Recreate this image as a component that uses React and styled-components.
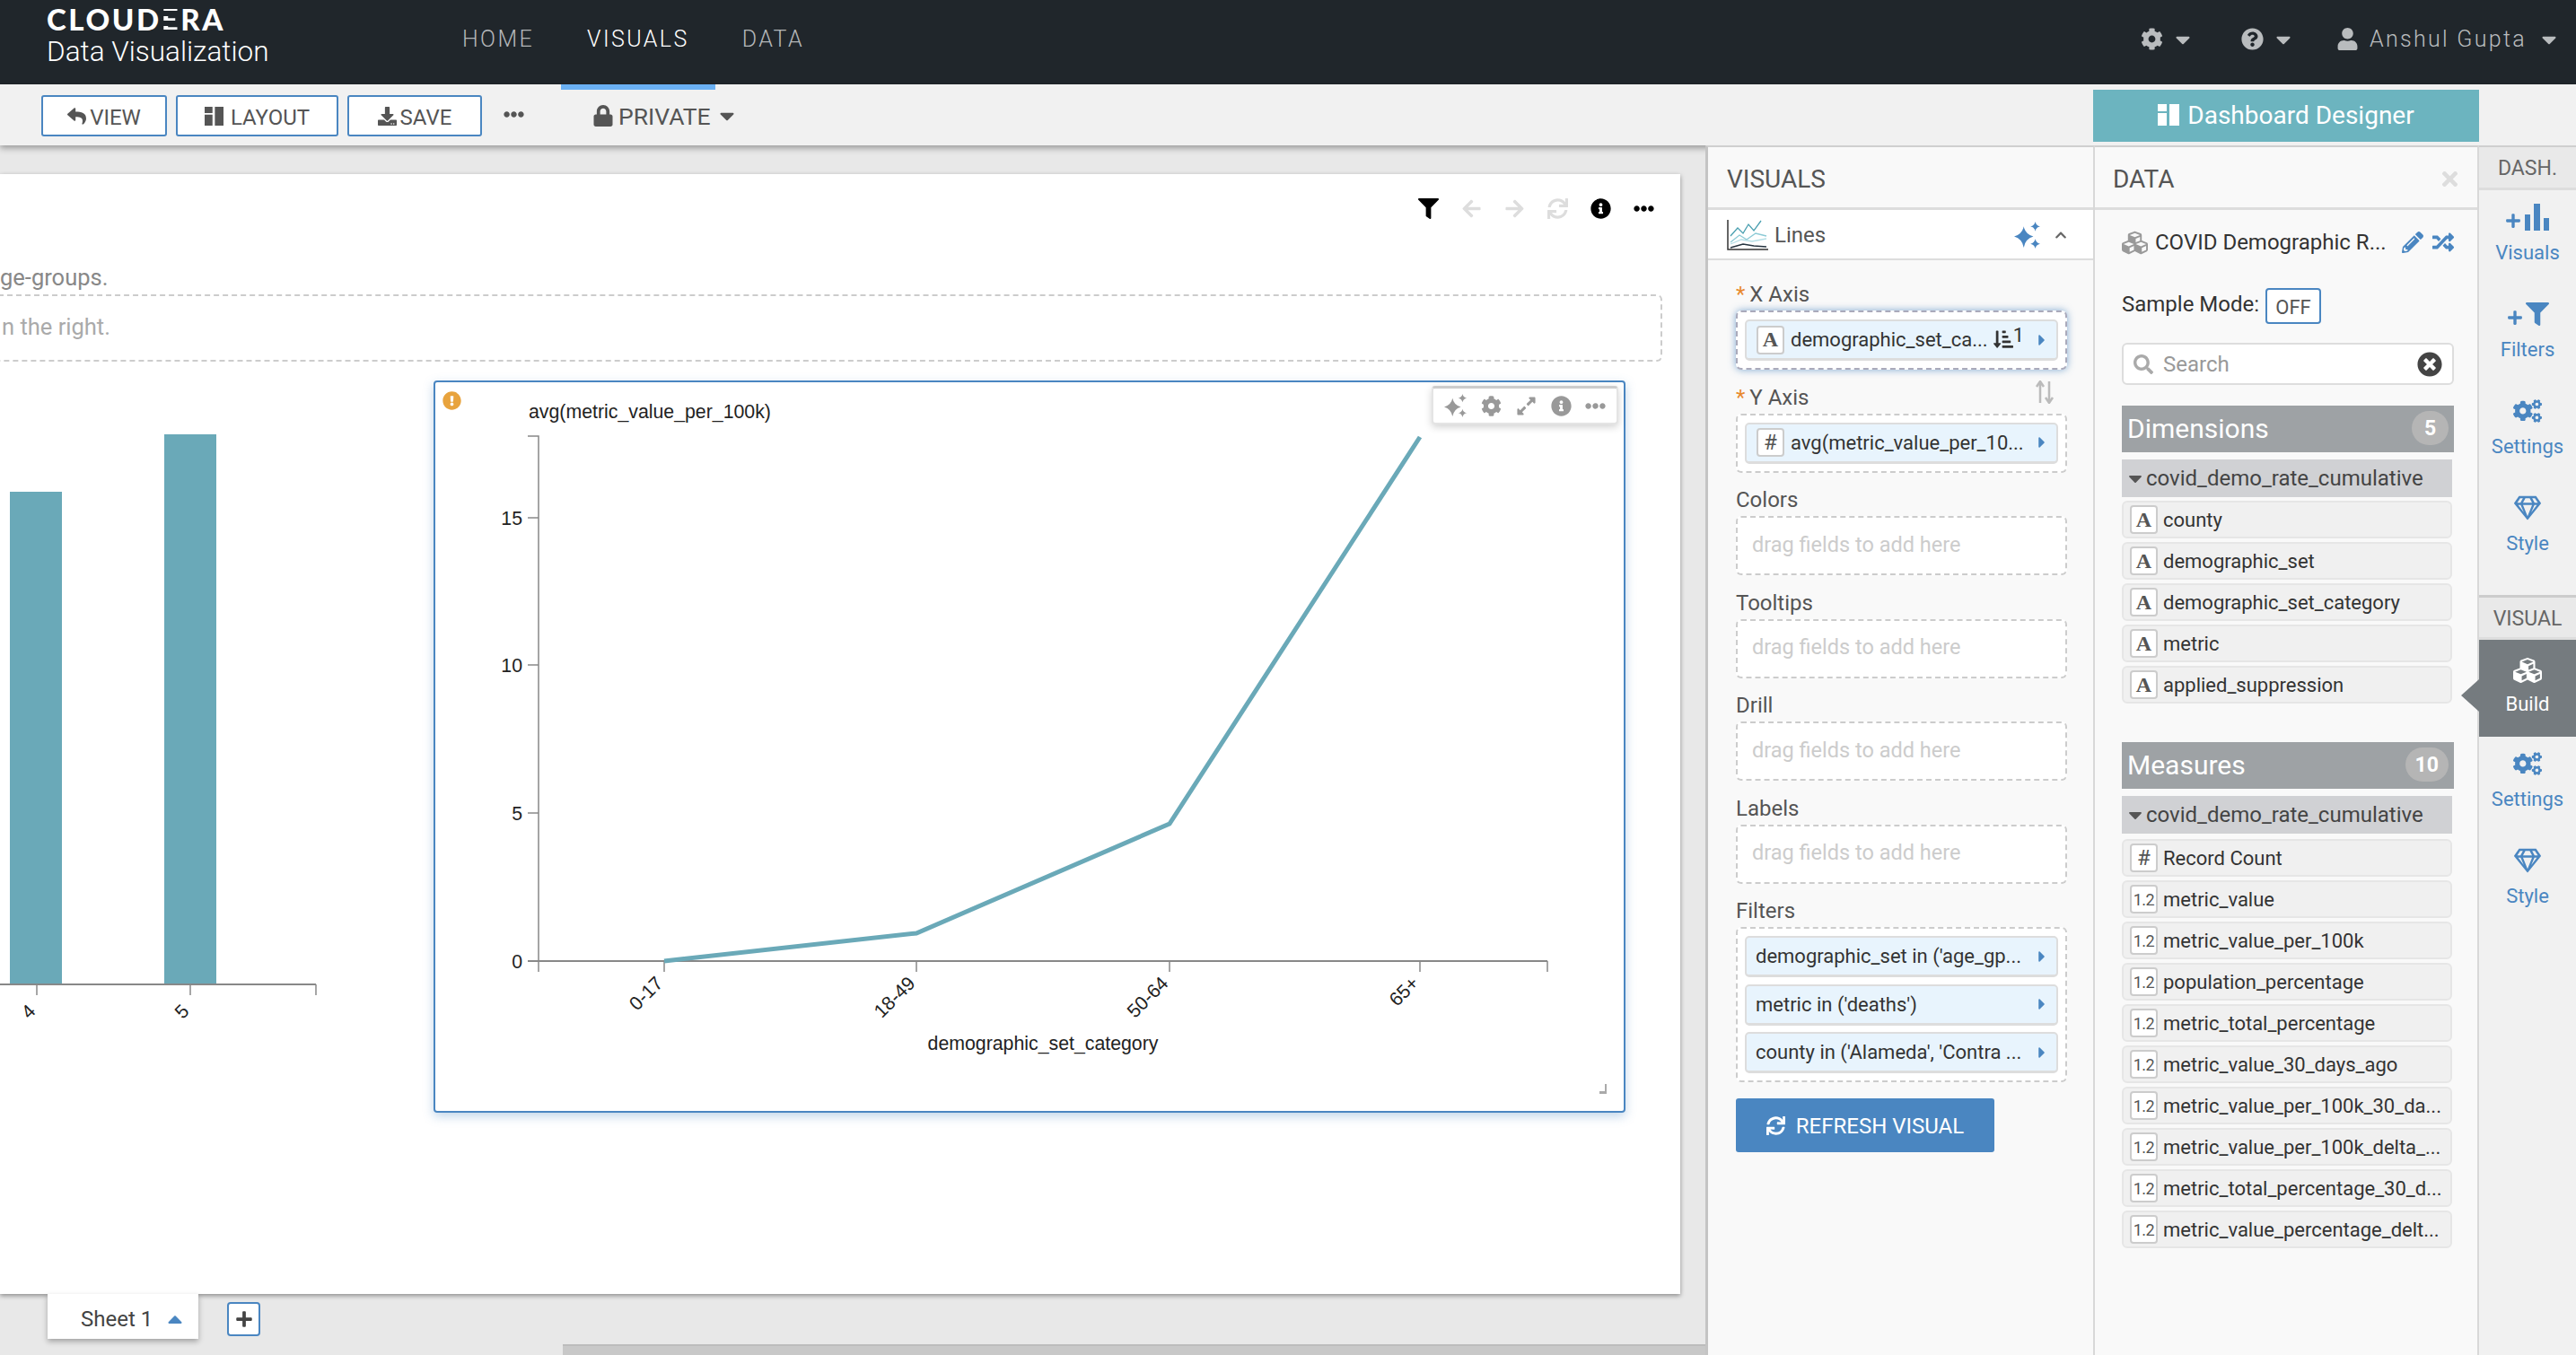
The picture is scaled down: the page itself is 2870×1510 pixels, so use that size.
import React from "react";
import styled, { createGlobalStyle } from "styled-components";
import {
  FaCog, FaQuestionCircle, FaUser, FaLock, FaReply, FaDownload, FaEllipsisH, FaFilter,
  FaArrowLeft, FaArrowRight, FaSync, FaInfoCircle, FaExpandAlt, FaPencilAlt, FaRandom,
  FaSearch, FaTimesCircle, FaTimes, FaCubes, FaCogs, FaRegGem, FaPlus, FaCaretRight,
  FaCaretDown, FaCaretUp, FaExclamationCircle, FaSortAmountDownAlt, FaChevronUp,
} from "react-icons/fa";

const BLUE = "#4a86c1";
const TEAL = "#6aa9b8";

const Global = createGlobalStyle`
  html, body { margin: 0; padding: 0; background: #e8e8e8; }
  body { font-family: Roboto, "Liberation Sans", sans-serif; color: #333; }
  * { box-sizing: border-box; }
`;

const Page = styled.div`
  width: 2870px;
  height: 1510px;
  overflow: hidden;
  display: flex;
  flex-direction: column;
`;

/* top navigation */
const TopBar = styled.header`
  height: 94px;
  background: #20262b;
  display: flex;
  align-items: center;
  padding: 0 17px 7px 52px;
  flex: none;
`;
const Brand = styled.div`
  width: 463px;
  color: #fff;
  margin-top: -8px;
`;
const BrandTop = styled.div`
  font-family: Lato, Roboto, sans-serif;
  font-size: 33px;
  font-weight: 900;
  letter-spacing: 2.6px;
  line-height: 36px;
`;
const StripedE = styled.span`
  color: transparent;
  background: linear-gradient(to bottom, transparent 16%, #fff 16%, #fff 28%, transparent 28%, transparent 43%, #fff 43%, #fff 54%, transparent 54%, transparent 69%, #fff 69%, #fff 81%, transparent 81%);
  -webkit-background-clip: text;
  background-clip: text;
`;
const BrandSub = styled.div`
  font-size: 31.5px;
  font-weight: 300;
  line-height: 37px;
`;
const NavLink = styled.a`
  font-size: 25px;
  font-weight: 300;
  letter-spacing: 2.4px;
  color: ${(p) => (p.$active ? "#fff" : "#b4b7b9")};
  margin-right: ${(p) => p.$gap}px;
`;
const TopRight = styled.div`
  margin-left: auto;
  display: flex;
  align-items: center;
  color: #b9bcbe;
  font-size: 25px;
  font-weight: 300;
  letter-spacing: 2.3px;
`;
const TopItem = styled.div`
  display: flex;
  align-items: center;
  gap: ${(p) => p.$gap}px;
  margin-left: ${(p) => p.$left}px;
  svg { font-size: 25px; flex: none; }
`;
const SmallCaret = styled(FaCaretDown)`
  font-size: 26px !important;
`;

/* toolbar */
const Toolbar = styled.div`
  height: 68px;
  flex: none;
  background: #f1f1f1;
  display: flex;
  padding-left: 46px;
  position: relative;
  z-index: 1;
  box-shadow: 0 3px 7px rgba(0, 0, 0, 0.35);
`;
const ActiveMark = styled.div`
  position: absolute;
  left: 625px;
  top: 0;
  width: 172px;
  height: 6px;
  background: #6ab0f3;
`;
const ToolButton = styled.button`
  height: 46px;
  margin-top: 12px;
  margin-right: 10px;
  width: ${(p) => p.$w}px;
  border: 2px solid ${BLUE};
  border-radius: 3px;
  background: #fff;
  color: #555;
  font: 400 24px Roboto, sans-serif;
  display: flex;
  align-items: center;
  justify-content: center;
  gap: ${(p) => p.$gap || 4}px;
  padding: 3px 0 0;
  svg { font-size: 21px; flex: none; margin-top: -3px; }
`;
const Dots = styled.div`
  margin: 15px 0 0 14px;
  height: 36px;
  display: flex;
  align-items: center;
  color: #555;
  font-size: 23px;
`;
const PrivateMenu = styled.div`
  margin-left: 76px;
  margin-top: 15px;
  height: 40px;
  display: flex;
  align-items: center;
  gap: 5px;
  color: #555;
  font-size: 26.5px;
  svg { font-size: 24px; }
`;
const DesignerTab = styled.div`
  position: absolute;
  left: 2332px;
  top: 6px;
  width: 430px;
  height: 58px;
  background: #6cb4bf;
  color: #fff;
  font-size: 28px;
  display: flex;
  align-items: center;
  justify-content: center;
  gap: 9px;
  padding-bottom: 2px;
`;

/* main area */
const Body = styled.div`
  flex: 1;
  display: flex;
  min-height: 0;
`;
const Canvas = styled.main`
  width: 1900px;
  flex: none;
  padding-top: 32px;
  position: relative;
  background: #e8e8e8;
`;
const Sheet = styled.section`
  width: 1872px;
  height: 1248px;
  background: #fff;
  overflow: hidden;
  box-shadow: 0 2px 5px rgba(0, 0, 0, 0.4);
`;
const SheetTools = styled.div`
  height: 36px;
  margin-top: 20px;
  padding-right: 29px;
  display: flex;
  justify-content: flex-end;
  align-items: center;
  gap: 25px;
`;
const SheetTool = styled.span`
  display: flex;
  color: ${(p) => (p.$off ? "#ddd" : "#000")};
  font-size: 23px;
`;
const SheetDesc = styled.div`
  margin-top: 45px;
  height: 28px;
  line-height: 28px;
  font-size: 25.5px;
  color: #888;
`;
const DescBox = styled.div`
  margin: 5px 20px 0 -8px;
  height: 75px;
  padding: 0 0 3px 8px;
  border: 2px dashed #ccc;
  border-radius: 6px;
  display: flex;
  align-items: center;
  font-size: 25.5px;
  color: #aaa;
`;
const Charts = styled.div`
  margin-top: 21px;
  display: flex;
  align-items: flex-start;
`;
const LeftChart = styled.svg`
  width: 483px;
  height: 816px;
  flex: none;
  display: block;
`;
const Card = styled.div`
  position: relative;
  width: 1328px;
  height: 816px;
  border: 2px solid ${BLUE};
  border-radius: 4px;
  box-shadow: 0 4px 12px rgba(74, 134, 193, 0.35);
  svg.plot { display: block; width: 1324px; height: 812px; }
`;
const WarnIcon = styled(FaExclamationCircle)`
  position: absolute;
  left: 8px;
  top: 10px;
  font-size: 21px;
  color: #e8a33d;
`;
const CardTools = styled.div`
  position: absolute;
  left: 1110px;
  top: 4px;
  width: 208px;
  height: 43px;
  background: #fff;
  border: 2px solid #e4e4e4;
  border-top: 3px solid #ccc;
  border-radius: 4px;
  box-shadow: 0 3px 8px rgba(0, 0, 0, 0.18);
  display: flex;
  align-items: center;
  justify-content: space-around;
  padding: 0 4px;
  color: #999;
  font-size: 23px;
  svg { flex: none; }
`;
const ResizeGrip = styled.div`
  position: absolute;
  right: 19px;
  bottom: 19px;
  width: 8px;
  height: 11px;
  border-right: 2px solid #aaa;
  border-bottom: 3px solid #aaa;
`;
const SheetTabs = styled.div`
  display: flex;
  align-items: flex-start;
  padding-left: 53px;
`;
const SheetTab = styled.div`
  width: 168px;
  height: 50px;
  background: #fff;
  box-shadow: 0 3px 6px rgba(0, 0, 0, 0.3);
  position: relative;
  display: flex;
  align-items: center;
  gap: 12px;
  padding: 5px 0 0 37px;
  font-size: 24px;
  color: #444;
  svg { color: ${BLUE}; font-size: 26px; }
`;
const AddSheet = styled.button`
  width: 37px;
  height: 38px;
  margin: 9px 0 0 32px;
  padding: 0;
  background: #fff;
  border: 2px solid ${BLUE};
  border-radius: 4px;
  display: flex;
  align-items: center;
  justify-content: center;
  color: #444;
  font-size: 20px;
`;
const Scrollbar = styled.div`
  position: absolute;
  left: 627px;
  bottom: 0;
  width: 1273px;
  height: 12px;
  background: #c8c8c8;
  border-top: 2px solid #bcbcbc;
`;

/* visuals / data columns */
const Panel = styled.aside`
  width: ${(p) => p.$w}px;
  flex: none;
  background: #f9f9f9;
  border-top: 2px solid #cfcfcf;
  border-left: ${(p) => (p.$edge ? "3px solid #c4c4c4" : "none")};
  border-right: 2px solid #d8d8d8;
  position: relative;
  z-index: 2;
`;
const PanelHead = styled.div`
  height: 70px;
  border-bottom: 3px solid #ddd;
  display: flex;
  align-items: center;
  justify-content: space-between;
  padding: 3px ${(p) => p.$pr || 0}px 0 ${(p) => p.$pl}px;
  font-size: 28px;
  color: #555;
  svg { color: #ddd; font-size: 25px; }
`;
const LinesRow = styled.div`
  height: 56px;
  background: #fff;
  border-bottom: 2px solid #ddd;
  display: flex;
  align-items: center;
  padding: 2px 29px 0 21px;
  font-size: 24px;
  color: #555;
  gap: 7px;
`;
const LinesEnd = styled.div`
  margin-left: auto;
  display: flex;
  align-items: center;
  gap: 15px;
  color: #666;
  svg.up { font-size: 14px; }
`;
const SparkleBox = styled.span`
  display: flex;
  color: ${BLUE};
`;
const Slots = styled.div`
  padding: 25px 29px 0 31px;
`;
const Slot = styled.div`
  margin-bottom: 17.5px;
`;
const SlotLabel = styled.div`
  height: 26px;
  line-height: 26px;
  margin-bottom: 5px;
  font-size: 24px;
  color: #555;
  display: flex;
  align-items: center;
  gap: 5px;
  b { color: #e8892f; font-weight: 400; }
`;
const SwapIcon = styled.svg`
  margin-left: auto;
  margin-right: 14px;
  margin-top: -12px;
  width: 22px;
  height: 26px;
`;
const Zone = styled.div`
  min-height: 66px;
  background: #fff;
  border: 2px dashed ${(p) => (p.$hot ? "#aab" : "#ccc")};
  border-radius: 6px;
  padding: 8px;
  display: flex;
  flex-direction: column;
  justify-content: center;
  gap: 7.5px;
  box-shadow: ${(p) => (p.$hot ? `0 0 8px rgba(74, 134, 193, 0.7)` : "none")};
`;
const Hint = styled.div`
  padding: 0 0 3px 8px;
  font-size: 23.5px;
  color: #ccc;
`;
const Pill = styled.div`
  height: 46px;
  background: #e8f4fd;
  border: 2px solid #ddd;
  border-bottom-width: 3px;
  border-radius: 5px;
  display: flex;
  align-items: center;
  padding: 0 6px 0 ${(p) => (p.$tag ? 11 : 10)}px;
  font-size: 22px;
  color: #333;
  gap: 7px;
  white-space: nowrap;
  svg.go { color: ${BLUE}; font-size: 20px; flex: none; }
`;
const PillText = styled.span`
  flex: 1;
  min-width: 0;
`;
const SortMark = styled.span`
  display: flex;
  align-items: flex-start;
  margin-right: 3px;
  line-height: 20px;
  margin-top: -4px;
  svg { font-size: 22px; margin-top: 3px; }
`;
const TypeTag = styled.span`
  width: 31px;
  height: 32px;
  flex: none;
  background: #fff;
  border: 2px solid #ccc;
  border-radius: 4px;
  display: flex;
  align-items: center;
  justify-content: center;
  color: #555;
  font-family: ${(p) => (p.$serif ? '"Liberation Serif", serif' : 'Roboto, sans-serif')};
  font-size: ${(p) => p.$size || 24}px;
  font-weight: ${(p) => (p.$serif ? 700 : 400)};
  letter-spacing: ${(p) => (p.$size ? "-0.5px" : 0)};
`;
const RefreshButton = styled.button`
  margin-top: 5px;
  width: 288px;
  height: 60px;
  background: ${BLUE};
  color: #fff;
  border: none;
  border-radius: 3px;
  font: 400 24px Roboto, sans-serif;
  display: flex;
  align-items: center;
  justify-content: center;
  gap: 12px;
  padding: 2px 0 0;
  svg { font-size: 21px; }
`;
const DataBody = styled.div`
  padding: 0 26px 0 30px;
`;
const DatasetRow = styled.div`
  height: 72px;
  display: flex;
  align-items: center;
  font-size: 24px;
  color: #333;
  gap: 8px;
  > svg:first-child { color: #999; font-size: 29px; }
`;
const DatasetIcons = styled.div`
  margin-left: auto;
  display: flex;
  gap: 10px;
  color: ${BLUE};
  font-size: 24px;
`;
const SampleRow = styled.div`
  margin-top: 15px;
  height: 40px;
  display: flex;
  align-items: center;
  gap: 7px;
  font-size: 24px;
  span { margin-top: -4px; }
`;
const OffButton = styled.button`
  width: 62px;
  height: 40px;
  padding: 3px 0 0;
  border: 2px solid ${BLUE};
  border-radius: 4px;
  background: #fff;
  color: #555;
  font: 400 22px Roboto, sans-serif;
`;
const SearchBox = styled.div`
  margin-top: 21px;
  height: 47px;
  background: #fff;
  border: 2px solid #ddd;
  border-radius: 6px;
  display: flex;
  align-items: center;
  padding: 0 11px;
  gap: 11px;
  font-size: 24px;
  color: #999;
  svg:first-child { font-size: 22px; color: #aaa; }
  svg:last-child { margin-left: auto; font-size: 28px; color: #444; }
`;
const SectionHead = styled.div`
  margin-top: ${(p) => p.$top}px;
  height: 52px;
  background: #9ea2a5;
  color: #fff;
  display: flex;
  align-items: center;
  justify-content: space-between;
  padding: 0 6px 2px;
  font-size: 30px;
`;
const Count = styled.span`
  min-width: 41px;
  height: 38px;
  padding: 0 11px;
  border-radius: 19px;
  background: #b5b5b5;
  font-size: 23px;
  font-weight: 700;
  display: flex;
  align-items: center;
  justify-content: center;
`;
const GroupRow = styled.div`
  margin-top: 8px;
  width: 368px;
  height: 42px;
  background: #d0d1d4;
  display: flex;
  align-items: center;
  padding-left: 3px;
  gap: 0;
  font-size: 24px;
  color: #444;
  svg { font-size: 24px; color: #555; }
`;
const FieldList = styled.div`
  margin-top: ${(p) => p.$top || 4}px;
  width: 368px;
  display: flex;
  flex-direction: column;
  gap: 4px;
`;
const Field = styled.div`
  height: 42px;
  background: #f0f0f0;
  border: 2px solid #e6e6e6;
  border-radius: 6px;
  display: flex;
  align-items: center;
  padding-left: 7px;
  gap: 6px;
  font-size: 22px;
  color: #333;
  white-space: nowrap;
  overflow: hidden;
`;

/* right rail */
const Rail = styled.nav`
  width: 108px;
  flex: none;
  background: #f1f1f1;
  border-top: 2px solid #cfcfcf;
  position: relative;
  z-index: 2;
`;
const RailHead = styled.div`
  height: ${(p) => p.$h}px;
  margin-top: ${(p) => p.$top || 0}px;
  background: #e9e9e9;
  border-top: ${(p) => (p.$line ? "3px solid #ccc" : "none")};
  border-bottom: 3px solid #ddd;
  display: flex;
  align-items: center;
  justify-content: center;
  padding-top: 2px;
  font-size: 23px;
  color: #666;
`;
const RailItem = styled.div`
  position: relative;
  height: 108px;
  display: flex;
  flex-direction: column;
  align-items: center;
  padding-top: ${(p) => (p.$active ? 17 : 13)}px;
  gap: ${(p) => (p.$active ? 6 : 8)}px;
  font-size: 22px;
  line-height: 30px;
  color: ${(p) => (p.$active ? "#fff" : BLUE)};
  background: ${(p) => (p.$active ? "#757b7f" : "transparent")};
  ${(p) => p.$active && `
    &::before {
      content: "";
      position: absolute;
      left: -20px;
      top: 44px;
      border-style: solid;
      border-width: 18px 20px 18px 0;
      border-color: transparent #757b7f transparent transparent;
    }
  `}
`;
const RailIcon = styled.div`
  height: 34px;
  display: flex;
  align-items: center;
  justify-content: center;
  gap: 3px;
  font-size: ${(p) => p.$size || 30}px;
`;
const PlusMark = styled(FaPlus)`
  font-size: 18px;
  margin-top: 8px;
`;

const LayoutGlyph = ({ size = 24 }) => (
  <svg width={size} height={size} viewBox="0 0 24 24" fill="currentColor">
    <rect x="0" y="0" width="10" height="8" />
    <rect x="0" y="10" width="10" height="14" />
    <rect x="13" y="0" width="11" height="24" />
  </svg>
);

const Sparkle = ({ size = 28 }) => (
  <svg width={size} height={size} viewBox="0 0 28 28" fill="currentColor">
    <path d="M10 5 Q11.5 13 20 15.5 Q11.5 18 10 27 Q8.5 18 0 15.5 Q8.5 13 10 5 Z" />
    <path d="M22 0 Q22.8 4.2 27 5 Q22.8 5.8 22 10 Q21.2 5.8 17 5 Q21.2 4.2 22 0 Z" />
    <path d="M22 18 Q22.8 22.2 27 23 Q22.8 23.8 22 28 Q21.2 23.8 17 23 Q21.2 22.2 22 18 Z" />
  </svg>
);

const LinesGlyph = () => (
  <svg width="46" height="34" viewBox="0 0 46 34" fill="none">
    <path d="M1 0 V33 H46" stroke="#333" strokeWidth="1.5" />
    <path d="M4 18 L12 9 L18 15 L24 5 L30 12 L38 1" stroke="#4a9fb0" strokeWidth="1.3" />
    <path d="M4 25 L14 17 L22 22 L32 15 L44 18" stroke="#8ccad6" strokeWidth="1.3" />
    <path d="M4 27 L16 22 L28 24 L44 21" stroke="#b5dfe6" strokeWidth="1.3" />
    <path d="M4 31 L18 27 L30 29 L44 30" stroke="#24333f" strokeWidth="1.5" />
  </svg>
);

const BarsGlyph = () => (
  <svg width="30" height="30" viewBox="0 0 30 30" fill="currentColor">
    <rect x="1" y="12" width="6" height="18" />
    <rect x="11" y="0" width="7" height="30" />
    <rect x="22" y="16" width="6" height="14" />
  </svg>
);

const chartText = { fontFamily: '"Liberation Sans", Arial, sans-serif', fontSize: 21.3, fill: "#222" };

const XTick = ({ x, label }) => (
  <g>
    <line x1={x} y1="1071" x2={x} y2="1083" stroke="#888" strokeWidth="1.5" />
    <text x={x} y="1097" textAnchor="end" transform={`rotate(-45 ${x} 1097)`} style={chartText}>{label}</text>
  </g>
);

const YTick = ({ y, label }) => (
  <g>
    <line x1="588" y1={y} x2="600" y2={y} stroke="#888" strokeWidth="1.5" />
    <text x="582" y={y + 8} textAnchor="end" style={chartText}>{label}</text>
  </g>
);

const LinePlot = () => (
  <svg className="plot" viewBox="485 426 1324 812">
    <text x="589" y="466" style={chartText}>avg(metric_value_per_100k)</text>
    <path d="M588 486 H600 V1071" fill="none" stroke="#888" strokeWidth="1.5" />
    <line x1="588" y1="1071" x2="1724" y2="1071" stroke="#888" strokeWidth="2" />
    <line x1="600" y1="1071" x2="600" y2="1083" stroke="#888" strokeWidth="1.5" />
    <line x1="1724" y1="1071" x2="1724" y2="1083" stroke="#888" strokeWidth="1.5" />
    <YTick y={577} label="15" />
    <YTick y={741} label="10" />
    <YTick y={906} label="5" />
    <YTick y={1071} label="0" />
    <XTick x={740} label="0-17" />
    <XTick x={1021} label="18-49" />
    <XTick x={1303} label="50-64" />
    <XTick x={1582} label="65+" />
    <polyline points="740,1071 1021,1040 1303,918 1582,487" fill="none" stroke={TEAL} strokeWidth="5" />
    <text x="1162" y="1170" textAnchor="middle" style={chartText}>demographic_set_category</text>
  </svg>
);

const BarPlot = () => (
  <LeftChart viewBox="0 424 483 816">
    <rect x="11" y="548" width="58" height="549" fill={TEAL} />
    <rect x="183" y="484" width="58" height="613" fill={TEAL} />
    <line x1="0" y1="1097" x2="352" y2="1097" stroke="#888" strokeWidth="2" />
    <line x1="41" y1="1097" x2="41" y2="1109" stroke="#888" strokeWidth="1.5" />
    <line x1="212" y1="1097" x2="212" y2="1109" stroke="#888" strokeWidth="1.5" />
    <line x1="352" y1="1097" x2="352" y2="1109" stroke="#888" strokeWidth="1.5" />
    <text x="41" y="1128" textAnchor="end" transform="rotate(-45 41 1128)" style={chartText}>4</text>
    <text x="212" y="1128" textAnchor="end" transform="rotate(-45 212 1128)" style={chartText}>5</text>
  </LeftChart>
);

const emptySlots = ["Colors", "Tooltips", "Drill", "Labels"];
const filters = ["demographic_set in ('age_gp...", "metric in ('deaths')", "county in ('Alameda', 'Contra ..."];
const dimensions = ["county", "demographic_set", "demographic_set_category", "metric", "applied_suppression"];
const measures = [
  "metric_value", "metric_value_per_100k", "population_percentage", "metric_total_percentage",
  "metric_value_30_days_ago", "metric_value_per_100k_30_da...", "metric_value_per_100k_delta_...",
  "metric_total_percentage_30_d...", "metric_value_percentage_delt...",
];

const App = () => (
  <Page>
    <Global />
    <TopBar>
      <Brand>
        <BrandTop>CLOUD<StripedE>E</StripedE>RA</BrandTop>
        <BrandSub>Data Visualization</BrandSub>
      </Brand>
      <NavLink $gap={59}>HOME</NavLink>
      <NavLink $gap={59} $active>VISUALS</NavLink>
      <NavLink>DATA</NavLink>
      <TopRight>
        <TopItem $left={0} $gap={9}><FaCog /><SmallCaret /></TopItem>
        <TopItem $left={52} $gap={9}><FaQuestionCircle /><SmallCaret /></TopItem>
        <TopItem $left={46} $gap={12}><FaUser />Anshul Gupta<SmallCaret /></TopItem>
      </TopRight>
    </TopBar>

    <Toolbar>
      <ActiveMark />
      <ToolButton $w={140}><FaReply />VIEW</ToolButton>
      <ToolButton $w={181} $gap={8}><LayoutGlyph size={21} />LAYOUT</ToolButton>
      <ToolButton $w={150}><FaDownload />SAVE</ToolButton>
      <Dots><FaEllipsisH /></Dots>
      <PrivateMenu><FaLock />PRIVATE<SmallCaret /></PrivateMenu>
      <DesignerTab><LayoutGlyph />Dashboard Designer</DesignerTab>
    </Toolbar>

    <Body>
      <Canvas>
        <Sheet>
          <SheetTools>
            <SheetTool><FaFilter /></SheetTool>
            <SheetTool $off><FaArrowLeft /></SheetTool>
            <SheetTool $off><FaArrowRight /></SheetTool>
            <SheetTool $off><FaSync /></SheetTool>
            <SheetTool><FaInfoCircle /></SheetTool>
            <SheetTool><FaEllipsisH /></SheetTool>
          </SheetTools>
          <SheetDesc>ge-groups.</SheetDesc>
          <DescBox>n the right.</DescBox>
          <Charts>
            <BarPlot />
            <Card>
              <LinePlot />
              <WarnIcon />
              <CardTools>
                <Sparkle size={26} />
                <FaCog />
                <FaExpandAlt />
                <FaInfoCircle />
                <FaEllipsisH />
              </CardTools>
              <ResizeGrip />
            </Card>
          </Charts>
        </Sheet>
        <SheetTabs>
          <SheetTab>Sheet 1<FaCaretUp /></SheetTab>
          <AddSheet><FaPlus /></AddSheet>
        </SheetTabs>
        <Scrollbar />
      </Canvas>

      <Panel $w={434} $edge>
        <PanelHead $pl={21}>VISUALS</PanelHead>
        <LinesRow>
          <LinesGlyph />
          Lines
          <LinesEnd>
            <SparkleBox><Sparkle size={30} /></SparkleBox>
            <FaChevronUp className="up" />
          </LinesEnd>
        </LinesRow>
        <Slots>
          <Slot>
            <SlotLabel><b>*</b>X Axis</SlotLabel>
            <Zone $hot>
              <Pill $tag>
                <TypeTag $serif>A</TypeTag>
                <PillText>demographic_set_ca...</PillText>
                <SortMark><FaSortAmountDownAlt />1</SortMark>
                <FaCaretRight className="go" />
              </Pill>
            </Zone>
          </Slot>
          <Slot>
            <SlotLabel>
              <b>*</b>Y Axis
              <SwapIcon viewBox="0 0 22 26" fill="none" stroke="#bbb" strokeWidth="2.5">
                <path d="M6 25 V2 M2 7 L6 1 L10 7" />
                <path d="M16 1 V24 M12 19 L16 25 L20 19" />
              </SwapIcon>
            </SlotLabel>
            <Zone>
              <Pill $tag>
                <TypeTag>#</TypeTag>
                <PillText>avg(metric_value_per_10...</PillText>
                <FaCaretRight className="go" />
              </Pill>
            </Zone>
          </Slot>
          {emptySlots.map((name) => (
            <Slot key={name}>
              <SlotLabel>{name}</SlotLabel>
              <Zone><Hint>drag fields to add here</Hint></Zone>
            </Slot>
          ))}
          <Slot>
            <SlotLabel>Filters</SlotLabel>
            <Zone>
              {filters.map((f) => (
                <Pill key={f}><PillText>{f}</PillText><FaCaretRight className="go" /></Pill>
              ))}
            </Zone>
          </Slot>
          <RefreshButton><FaSync />REFRESH VISUAL</RefreshButton>
        </Slots>
      </Panel>

      <Panel $w={428}>
        <PanelHead $pl={20} $pr={18}>DATA<FaTimes /></PanelHead>
        <DataBody>
          <DatasetRow>
            <FaCubes />
            COVID Demographic R...
            <DatasetIcons><FaPencilAlt /><FaRandom /></DatasetIcons>
          </DatasetRow>
          <SampleRow><span>Sample Mode:</span><OffButton>OFF</OffButton></SampleRow>
          <SearchBox><FaSearch />Search<FaTimesCircle /></SearchBox>
          <SectionHead $top={23}>Dimensions<Count>5</Count></SectionHead>
          <GroupRow><FaCaretDown />covid_demo_rate_cumulative</GroupRow>
          <FieldList>
            {dimensions.map((d) => (
              <Field key={d}><TypeTag $serif>A</TypeTag>{d}</Field>
            ))}
          </FieldList>
          <SectionHead $top={43}>Measures<Count>10</Count></SectionHead>
          <GroupRow><FaCaretDown />covid_demo_rate_cumulative</GroupRow>
          <FieldList $top={6}>
            <Field><TypeTag>#</TypeTag>Record Count</Field>
            {measures.map((m) => (
              <Field key={m}><TypeTag $size={18}>1.2</TypeTag>{m}</Field>
            ))}
          </FieldList>
        </DataBody>
      </Panel>

      <Rail>
        <RailHead $h={48}>DASH.</RailHead>
        <RailItem><RailIcon><PlusMark /><BarsGlyph /></RailIcon>Visuals</RailItem>
        <RailItem><RailIcon $size={26}><PlusMark /><FaFilter /></RailIcon>Filters</RailItem>
        <RailItem><RailIcon $size={32}><FaCogs /></RailIcon>Settings</RailItem>
        <RailItem><RailIcon><FaRegGem /></RailIcon>Style</RailItem>
        <RailHead $h={50} $top={19} $line>VISUAL</RailHead>
        <RailItem $active><RailIcon $size={32}><FaCubes /></RailIcon>Build</RailItem>
        <RailItem><RailIcon $size={32}><FaCogs /></RailIcon>Settings</RailItem>
        <RailItem><RailIcon><FaRegGem /></RailIcon>Style</RailItem>
      </Rail>
    </Body>
  </Page>
);

export default App;
